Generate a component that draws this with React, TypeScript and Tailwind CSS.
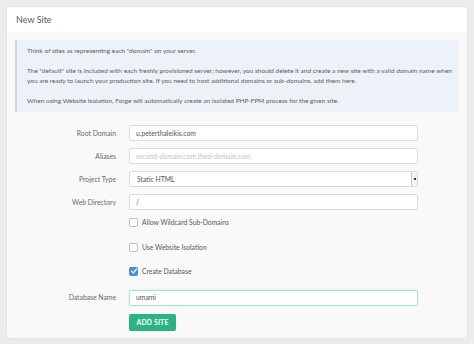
export default function App() {
  return (
    <div className="h-[344px] w-[474px] bg-[#ececec] p-[7px] font-['Lato',sans-serif] text-[#4a4a4a]">
      <div className="h-[331px] overflow-hidden rounded-[3px] bg-[#f9f9f9] shadow-[0_0_2px_rgba(0,0,0,0.12)]">
        <div className="flex h-[25px] items-center bg-white px-[9px] text-[9px] text-[#5a5a5a]">New Site</div>

        <div className="px-[8px] pt-[8px]">
          <div className="border-l-2 border-[#cfd8e2] bg-[#edf2f8] pb-[6px] pl-[10px] pr-[6px] pt-[6px] text-[6.5px] leading-[10px] text-[#606060]">
            <p>Think of sites as representing each "domain" on your server.</p>
            <p className="mt-[10px]">
              The "default" site is included with each freshly provisioned server; however, you should delete it and create a new site with a valid domain name
              when you are ready to launch your production site. If you need to host additional domains or sub-domains, add them here.
            </p>
            <p className="mt-[10px]">When using Website Isolation, Forge will automatically create an isolated PHP-FPM process for the given site.</p>
          </div>
        </div>

        <div className="mt-[13px] flex flex-col text-[6.8px]">
          <Row label="Root Domain">
            <Input value="u.peterthaleikis.com" />
          </Row>
          <Row label="Aliases" className="mt-[7px]">
            <Input value="second-domain.com,third-domain.com" placeholder />
          </Row>
          <Row label="Project Type" className="mt-[7px]">
            <div className="flex h-[16px] w-[289px] items-center justify-between rounded-[2px] border border-[#d9d9d9] bg-white pl-[7px] text-[#555]">
              <span>Static HTML</span>
              <span className="flex h-[14px] w-[6px] items-center justify-center border-l border-[#ccc] bg-[#f3f3f3]">
                <span className="h-[2px] w-[2px] bg-[#333]" />
              </span>
            </div>
          </Row>
          <Row label="Web Directory" className="mt-[7px]">
            <Input value="/" />
          </Row>

          <Check label="Allow Wildcard Sub-Domains" className="mt-[7px]" />
          <Check label="Use Website Isolation" className="mt-[15px]" />
          <Check label="Create Database" checked className="mt-[14px]" />

          <Row label="Database Name" className="mt-[13px]">
            <div className="flex h-[16px] w-[289px] items-center rounded-[2px] border border-[#a8e6d2] bg-white px-[6px] text-[#555] shadow-[0_0_2px_rgba(43,181,127,0.25)]">
              umami
            </div>
          </Row>

          <div className="mt-[8px] pl-[122px]">
            <button className="flex h-[17px] w-[47px] items-center justify-center rounded-[2px] bg-[#2bb382] text-[6.8px] font-bold tracking-[0.2px] text-white">
              ADD SITE
            </button>
          </div>
        </div>
      </div>
    </div>
  );
}

function Row({ label, children, className = "" }: { label: string; children: React.ReactNode; className?: string }) {
  return (
    <div className={`flex items-center ${className}`}>
      <div className="w-[109px] text-right text-[#6a6a6a]">{label}</div>
      <div className="ml-[13px]">{children}</div>
    </div>
  );
}

function Input({ value, placeholder = false }: { value: string; placeholder?: boolean }) {
  return (
    <div
      className={`flex h-[16px] w-[289px] items-center rounded-[2px] border border-[#dcdcdc] bg-white px-[6px] ${
        placeholder ? "text-[#c4c4c4]" : "text-[#555]"
      }`}
    >
      {value}
    </div>
  );
}

function Check({ label, checked = false, className = "" }: { label: string; checked?: boolean; className?: string }) {
  return (
    <div className={`flex items-center pl-[122px] ${className}`}>
      {checked ? (
        <span className="flex h-[9px] w-[9px] items-center justify-center rounded-[2px] bg-[#4a90d9]">
          <svg viewBox="0 0 10 10" className="h-[8px] w-[8px]">
            <path d="M2 5.2 L4.2 7.3 L8.2 2.6" fill="none" stroke="white" strokeWidth="1.6" strokeLinecap="round" strokeLinejoin="round" />
          </svg>
        </span>
      ) : (
        <span className="h-[9px] w-[9px] rounded-[2px] border border-[#bdbdbd] bg-white" />
      )}
      <span className="ml-[4px] text-[#5a5a5a]">{label}</span>
    </div>
  );
}
